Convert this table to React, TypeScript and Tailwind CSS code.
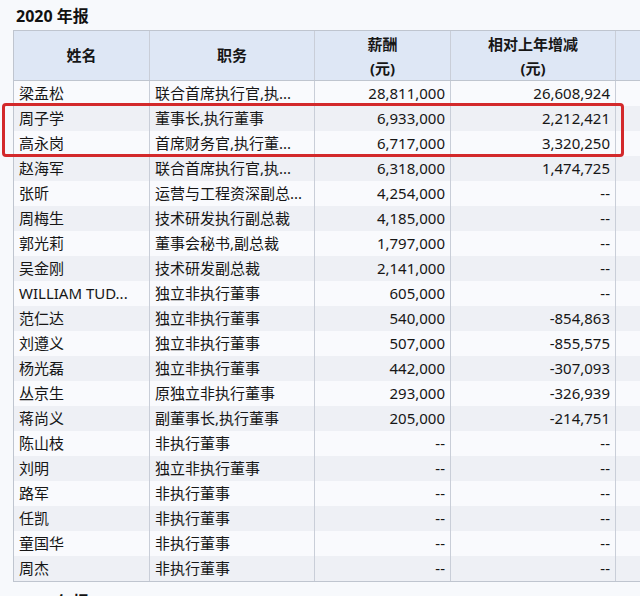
import React from "react";

type Row = [string, string, string, string];

const ROWS: Row[] = [
  ["梁孟松", "联合首席执行官,执...", "28,811,000", "26,608,924"],
  ["周子学", "董事长,执行董事", "6,933,000", "2,212,421"],
  ["高永岗", "首席财务官,执行董...", "6,717,000", "3,320,250"],
  ["赵海军", "联合首席执行官,执...", "6,318,000", "1,474,725"],
  ["张昕", "运营与工程资深副总...", "4,254,000", "--"],
  ["周梅生", "技术研发执行副总裁", "4,185,000", "--"],
  ["郭光莉", "董事会秘书,副总裁", "1,797,000", "--"],
  ["吴金刚", "技术研发副总裁", "2,141,000", "--"],
  ["WILLIAM TUD...", "独立非执行董事", "605,000", "--"],
  ["范仁达", "独立非执行董事", "540,000", "-854,863"],
  ["刘遵义", "独立非执行董事", "507,000", "-855,575"],
  ["杨光磊", "独立非执行董事", "442,000", "-307,093"],
  ["丛京生", "原独立非执行董事", "293,000", "-326,939"],
  ["蒋尚义", "副董事长,执行董事", "205,000", "-214,751"],
  ["陈山枝", "非执行董事", "--", "--"],
  ["刘明", "独立非执行董事", "--", "--"],
  ["路军", "非执行董事", "--", "--"],
  ["任凯", "非执行董事", "--", "--"],
  ["童国华", "非执行董事", "--", "--"],
  ["周杰", "非执行董事", "--", "--"],
];

const cols = "grid grid-cols-[136px_165px_136px_165px_140px]";
const cell = "border-r border-[#c9ced8] px-[5px] whitespace-nowrap overflow-hidden";

const App = () => {
  return (
    <div
      className="w-[640px] h-[596px] overflow-hidden bg-[#f7f9fc] text-[#161616]"
      style={{ fontFamily: '"Noto Sans", "Noto Sans CJK SC", sans-serif' }}
    >
      <h2 className="h-[30px] pl-[16px] pt-[6px] text-[16px] leading-[20px] font-bold text-[#111]">
        2020 年报
      </h2>
      <div className="relative pl-[13px]">
        <div className="w-[760px] border-l border-t border-b border-[#bfc5cf] text-[15px]">
          {/* header */}
          <div className={`${cols} h-[50px] bg-[#dee7f5] border-b border-[#bfc5cf] font-bold`}>
            <div className={`${cell} flex items-center justify-center`}>姓名</div>
            <div className={`${cell} flex items-center justify-center`}>职务</div>
            <div className={`${cell} flex flex-col items-center justify-center leading-[24px]`}>
              <span>薪酬</span>
              <span>(元)</span>
            </div>
            <div className={`${cell} flex flex-col items-center justify-center leading-[24px]`}>
              <span>相对上年增减</span>
              <span>(元)</span>
            </div>
            <div className={cell}></div>
          </div>
          {ROWS.map((r, i) => (
            <div
              key={i}
              className={`${cols} h-[25px] leading-[25px] ${i % 2 === 0 ? "bg-[#f9fafd]" : "bg-[#eef0f5]"}`}
            >
              <div className={cell}>{r[0]}</div>
              <div className={cell}>{r[1]}</div>
              <div className={`${cell} text-right`}>{r[2]}</div>
              <div className={`${cell} text-right`}>{r[3]}</div>
              <div className={cell}></div>
            </div>
          ))}
        </div>
        {/* highlight box */}
        <div className="absolute left-[2px] top-[73px] w-[622px] h-[54px] border-[3px] border-[#d3292b] rounded-[4px]"></div>
      </div>
      <h2 className="pl-[16px] pt-[10px] text-[16px] leading-[20px] font-bold text-[#111]">
        2019 年报
      </h2>
    </div>
  );
};

export default App;
